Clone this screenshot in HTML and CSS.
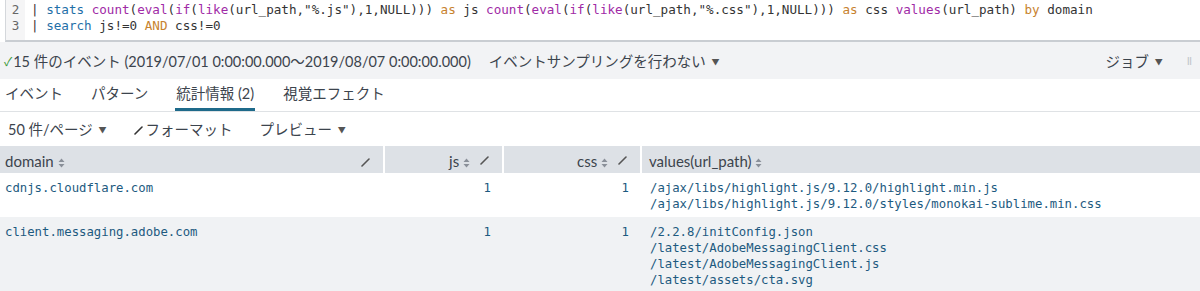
FILE: index.html
```html
<!DOCTYPE html>
<html lang="ja">

<head>
    <meta charset="UTF-8">
    <title>Search</title>
    <link rel="stylesheet" href="styles.css">
</head>

<body>
    <div class="editor">
        <div class="gutter">
            <div>2</div>
            <div>3</div>
        </div>
        <div class="code">
            <div class="line">| <span class="cmd">stats</span> <span class="fn">count</span>(<span class="fn">eval</span>(<span class="fn">if</span>(<span class="fn">like</span>(url_path,"%.js"),1,NULL))) <span class="kw">as</span> js <span class="fn">count</span>(<span class="fn">eval</span>(<span class="fn">if</span>(<span class="fn">like</span>(url_path,"%.css"),1,NULL))) <span class="kw">as</span> css <span class="fn">values</span>(url_path) <span class="kw">by</span> domain</div>
            <div class="line">| <span class="cmd">search</span> js!=0 <span class="kw">AND</span> css!=0</div>
        </div>
    </div>

    <div class="status">
        <span class="check">✓</span><span class="count">15 件のイベント (2019/07/01 0:00:00.000〜2019/08/07 0:00:00.000)</span>
        <span class="sampling">イベントサンプリングを行わない <span class="caret">▼</span></span>
        <span class="job">ジョブ <span class="caret">▼</span></span>
        <span class="pause">II</span>
    </div>

    <div class="tabs">
        <span class="tab">イベント</span>
        <span class="tab">パターン</span>
        <span class="tab active">統計情報 (2)</span>
        <span class="tab">視覚エフェクト</span>
    </div>

    <div class="toolbar">
        <span class="tool">50 件/ページ <span class="caret">▼</span></span>
        <span class="tool"><svg class="pen" width="9" height="9" viewBox="0 0 9 9"><path d="M1 8 L8 1" stroke="#333" stroke-width="1.6" stroke-linecap="round"/></svg>フォーマット</span>
        <span class="tool">プレビュー <span class="caret">▼</span></span>
    </div>

    <table class="results">
        <thead>
            <tr>
                <th class="c-domain"><span>domain <svg class="sort" width="7" height="10" viewBox="0 0 7 10"><path d="M3.5 0.5 L6.5 4 L0.5 4 Z M0.5 6 L6.5 6 L3.5 9.5 Z" fill="#8a9099"/></svg></span><svg class="pen" width="9" height="9" viewBox="0 0 9 9"><path d="M1 8 L8 1" stroke="#555" stroke-width="1.6" stroke-linecap="round"/></svg></th>
                <th class="c-num"><span>js <svg class="sort" width="7" height="10" viewBox="0 0 7 10"><path d="M3.5 0.5 L6.5 4 L0.5 4 Z M0.5 6 L6.5 6 L3.5 9.5 Z" fill="#8a9099"/></svg></span><svg class="pen" width="9" height="9" viewBox="0 0 9 9"><path d="M1 8 L8 1" stroke="#555" stroke-width="1.6" stroke-linecap="round"/></svg></th>
                <th class="c-num c-css"><span>css <svg class="sort" width="7" height="10" viewBox="0 0 7 10"><path d="M3.5 0.5 L6.5 4 L0.5 4 Z M0.5 6 L6.5 6 L3.5 9.5 Z" fill="#8a9099"/></svg></span><svg class="pen" width="9" height="9" viewBox="0 0 9 9"><path d="M1 8 L8 1" stroke="#555" stroke-width="1.6" stroke-linecap="round"/></svg></th>
                <th class="c-values"><span>values(url_path) <svg class="sort" width="7" height="10" viewBox="0 0 7 10"><path d="M3.5 0.5 L6.5 4 L0.5 4 Z M0.5 6 L6.5 6 L3.5 9.5 Z" fill="#8a9099"/></svg></span></th>
            </tr>
        </thead>
        <tbody>
            <tr>
                <td>cdnjs.cloudflare.com</td>
                <td class="num">1</td>
                <td class="num">1</td>
                <td>/ajax/libs/highlight.js/9.12.0/highlight.min.js<br>/ajax/libs/highlight.js/9.12.0/styles/monokai-sublime.min.css</td>
            </tr>
            <tr class="odd">
                <td>client.messaging.adobe.com</td>
                <td class="num">1</td>
                <td class="num">1</td>
                <td>/2.2.8/initConfig.json<br>/latest/AdobeMessagingClient.css<br>/latest/AdobeMessagingClient.js<br>/latest/assets/cta.svg</td>
            </tr>
        </tbody>
    </table>
</body>

</html>
```

FILE: styles.css
```css
body {
    margin: 0;
    font-family: Lato, "Noto Sans CJK JP", sans-serif;
    color: #333;
    background: #fff;
    overflow: hidden;
}

/* search editor */
.editor {
    display: flex;
    margin-left: 5px;
    border-left: 1px solid #d4d7db;
    border-bottom: 2px solid #c9cdd2;
    height: 40px;
    font-family: "DejaVu Sans Mono", monospace;
    font-size: 12.6px;
    line-height: 16px;
}

.gutter {
    width: 19px;
    background: #f5f5f6;
    color: #666;
    text-align: center;
    padding-top: 2px;
}

.code {
    padding-top: 2px;
    padding-left: 6px;
    color: #333;
}

.line {
    white-space: pre;
}

.cmd { color: #1f6fa8; }
.fn { color: #a02aa6; }
.kw { color: #c7822e; }

/* status bar */
.status {
    display: flex;
    align-items: center;
    height: 37px;
    background: #f2f3f5;
    padding-left: 4px;
    font-size: 14.5px;
    color: #3c444d;
}

.check {
    color: #3c9a3c;
    font-size: 12px;
    margin-right: 1px;
}

.sampling {
    margin-left: 18px;
}

.job {
    margin-left: auto;
}

.caret {
    font-size: 8px;
    color: #555;
    vertical-align: 2px;
    margin-left: 2px;
}

.pause {
    color: #c3c7cc;
    font-size: 11px;
    letter-spacing: -1px;
    margin-left: 24px;
    margin-right: 9px;
}

/* tabs */
.tabs {
    display: flex;
    height: 32px;
    border-bottom: 1px solid #dfe2e5;
    font-size: 14.5px;
    padding-left: 5px;
    gap: 28px;
}

.tab {
    line-height: 30px;
    color: #3c444d;
    border-bottom: 3px solid transparent;
    margin-bottom: -1px;
    height: 29px;
}

.tab.active {
    border-bottom-color: #1e6a8a;
    padding: 0 1px;
    margin-left: -1px;
}

/* toolbar */
.toolbar {
    display: flex;
    align-items: center;
    height: 33px;
    padding-left: 8px;
    gap: 27px;
    font-size: 14.5px;
    color: #3c444d;
}

.toolbar .pen {
    margin-right: 3px;
}

/* table */
.results {
    width: 100%;
    border-collapse: collapse;
    table-layout: fixed;
    margin-top: 1px;
}

.results th {
    background: #dde1e6;
    height: 27px;
    padding: 0 5px;
    font-weight: normal;
    font-size: 15px;
    text-align: left;
    border-left: 2px solid #fff;
    color: #3c444d;
    white-space: nowrap;
}

.results th:first-child {
    border-left: 0;
}

.results th.c-values {
    padding-left: 7px;
}

.results th > span {
    vertical-align: middle;
}

.c-domain { width: 373px; }
.c-num { width: 107px; }
.c-css { width: 126px; }

.results th .pen {
    float: right;
    margin-top: 9px;
    margin-right: 8px;
}

.results th.c-num {
    text-align: right;
}

.results th.c-num .pen {
    float: none;
    margin: 0 8px 0 10px;
    vertical-align: middle;
}

.sort {
    vertical-align: -1px;
}

.results td {
    font-family: "DejaVu Sans Mono", monospace;
    font-size: 12.3px;
    line-height: 16px;
    color: #1d5a80;
    padding: 7px 5px 5px 5px;
    vertical-align: top;
    white-space: nowrap;
}

.results td.num {
    text-align: right;
    padding-right: 12px;
}

.results tr.odd td {
    background: #f0f2f4;
}

.results td:last-child {
    padding-left: 9px;
}
```
